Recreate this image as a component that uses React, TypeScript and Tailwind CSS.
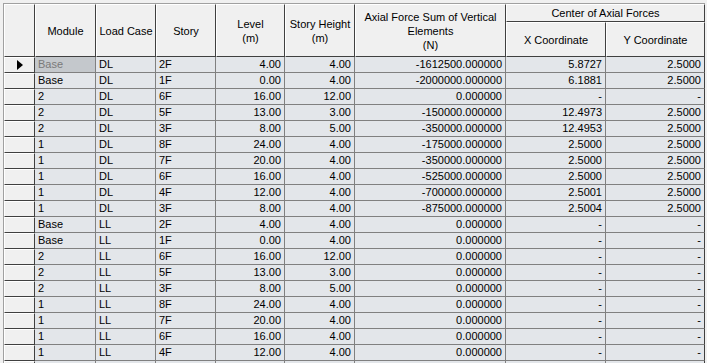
import React from "react";

type Row = [string, string, string, string, string, string, string, string];

const rows: Row[] = [
  ["Base", "DL", "2F", "4.00", "4.00", "-1612500.000000", "5.8727", "2.5000"],
  ["Base", "DL", "1F", "0.00", "4.00", "-2000000.000000", "6.1881", "2.5000"],
  ["2", "DL", "6F", "16.00", "12.00", "0.000000", "-", "-"],
  ["2", "DL", "5F", "13.00", "3.00", "-150000.000000", "12.4973", "2.5000"],
  ["2", "DL", "3F", "8.00", "5.00", "-350000.000000", "12.4953", "2.5000"],
  ["1", "DL", "8F", "24.00", "4.00", "-175000.000000", "2.5000", "2.5000"],
  ["1", "DL", "7F", "20.00", "4.00", "-350000.000000", "2.5000", "2.5000"],
  ["1", "DL", "6F", "16.00", "4.00", "-525000.000000", "2.5000", "2.5000"],
  ["1", "DL", "4F", "12.00", "4.00", "-700000.000000", "2.5001", "2.5000"],
  ["1", "DL", "3F", "8.00", "4.00", "-875000.000000", "2.5004", "2.5000"],
  ["Base", "LL", "2F", "4.00", "4.00", "0.000000", "-", "-"],
  ["Base", "LL", "1F", "0.00", "4.00", "0.000000", "-", "-"],
  ["2", "LL", "6F", "16.00", "12.00", "0.000000", "-", "-"],
  ["2", "LL", "5F", "13.00", "3.00", "0.000000", "-", "-"],
  ["2", "LL", "3F", "8.00", "5.00", "0.000000", "-", "-"],
  ["1", "LL", "8F", "24.00", "4.00", "0.000000", "-", "-"],
  ["1", "LL", "7F", "20.00", "4.00", "0.000000", "-", "-"],
  ["1", "LL", "6F", "16.00", "4.00", "0.000000", "-", "-"],
  ["1", "LL", "4F", "12.00", "4.00", "0.000000", "-", "-"],
  // next row is scrolled off, only its top edge shows
  ["", "", "", "", "", "", "", ""],
];

const cols = "grid-cols-[31px_61px_60px_60px_69px_70px_151px_100px_99px]";
const hd =
  "bg-[#f0f0f0] border-t border-l border-t-white border-l-white border-r border-b border-r-[#404040] border-b-[#404040] flex items-center justify-center text-center leading-[14px]";

function HeaderCell({ children, className = "" }: { children?: React.ReactNode; className?: string }) {
  return <div className={`${hd} ${className}`}>{children}</div>;
}

export default function App() {
  return (
    <div
      className="h-[363px] w-[707px] overflow-hidden bg-[#f0f0f0] pl-[3px] pt-[3px] text-[11px] text-black"
      style={{ fontFamily: '"Liberation Sans", Arial, sans-serif' }}
    >
      <div className="w-[702px] border-l border-t border-[#a0a0a0]">
        {/* header */}
        <div className={`grid ${cols} grid-rows-[18px_35px]`}>
          <HeaderCell className="row-span-2" />
          <HeaderCell className="row-span-2">Module</HeaderCell>
          <HeaderCell className="row-span-2">Load Case</HeaderCell>
          <HeaderCell className="row-span-2">Story</HeaderCell>
          <HeaderCell className="row-span-2">
            Level
            <br />
            (m)
          </HeaderCell>
          <HeaderCell className="row-span-2">
            Story Height
            <br />
            (m)
          </HeaderCell>
          <HeaderCell className="row-span-2">
            Axial Force Sum of Vertical
            <br />
            Elements
            <br />
            (N)
          </HeaderCell>
          <HeaderCell className="col-span-2">Center of Axial Forces</HeaderCell>
          <HeaderCell>X Coordinate</HeaderCell>
          <HeaderCell>Y Coordinate</HeaderCell>
        </div>

        {/* rows */}
        {rows.map((r, i) => (
          <div key={i} className={`grid ${cols} h-4`}>
            <div className="flex items-center border-l border-t border-l-white border-t-white border-r border-b border-r-[#404040] border-b-[#404040] bg-[#f0f0f0] pl-[12px]">
              {i === 0 && (
                <svg width="6" height="10" viewBox="0 0 6 10">
                  <polygon points="0,0 6,5 0,10" fill="#000" />
                </svg>
              )}
            </div>
            {r.map((v, j) => (
              <div
                key={j}
                className={`flex items-center overflow-hidden whitespace-nowrap border-r border-b border-[#808080] leading-none ${
                  j < 3 ? "justify-start pl-[3px]" : "justify-end pr-[3px]"
                } ${i === 0 && j === 0 ? "bg-[#c4c8cc] text-[#7a7a7a]" : "bg-[#e3e6ea]"} ${
                  j === 7 ? "border-r-[#404040]" : ""
                }`}
              >
                {v}
              </div>
            ))}
          </div>
        ))}
      </div>
    </div>
  );
}
